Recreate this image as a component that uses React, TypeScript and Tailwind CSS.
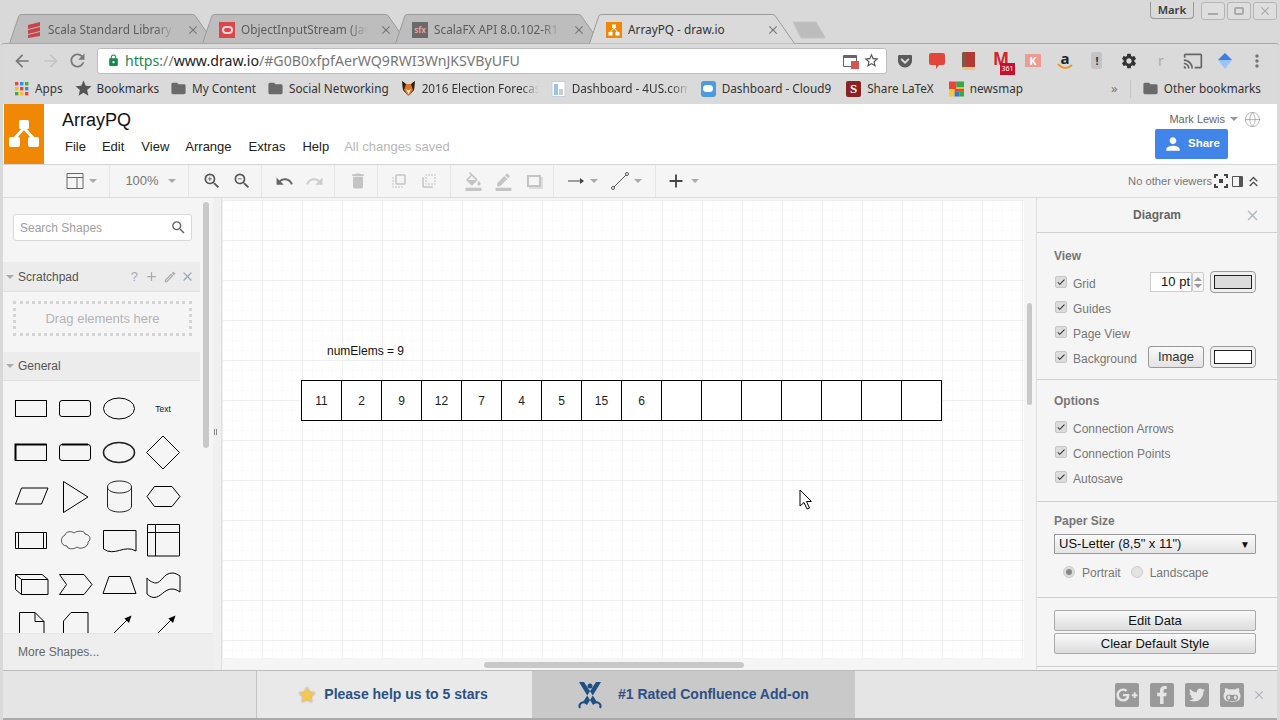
import React from "react";
import { MdArrowBack, MdArrowForward, MdRefresh, MdLock, MdStarBorder, MdStar, MdFolder, MdMoreVert, MdCast, MdSettings, MdZoomIn, MdZoomOut, MdUndo, MdRedo, MdDelete, MdFlipToFront, MdFlipToBack, MdFormatColorFill, MdBorderColor, MdAdd, MdSearch, MdPerson, MdCheck, MdClose, MdOutlineEdit, MdKeyboardDoubleArrowUp } from "react-icons/md";
import { FaGetPocket, FaGooglePlusG, FaFacebookF, FaTwitter, FaGithubAlt } from "react-icons/fa";
import { Globe } from "lucide-react";

const Caret = ({ cls = "border-t-[#aaa]" }: { cls?: string }) => (
  <span className={`inline-block w-0 h-0 border-x-[4px] border-x-transparent border-t-[4px] ${cls}`} />
);

function Tab({ title, icon, active, left }: { title: string; icon: React.ReactNode; active?: boolean; left: string }) {
  return (
    <div className={`absolute top-[14px] w-[206px] h-[30px] ${left} ${active ? "z-10" : ""}`}>
      <svg className="absolute inset-0" width="206" height="30" viewBox="0 0 206 30">
        <path d="M0.5 29.5 L10 1.5 Q11 0.5 13 0.5 L183 0.5 Q185 0.5 186 1.5 L205.5 29.5" fill={active ? "#dadada" : "#bdbdbd"} stroke="#9b9b9b" />
      </svg>
      <div className="relative flex items-center h-full pl-[17px] pr-[15px] gap-[6px] pt-[1px]">
        <span className="w-4 h-4 shrink-0 flex items-center justify-center">{icon}</span>
        <span className={`w-[127px] flex-none whitespace-nowrap overflow-hidden text-[11.8px] ${active ? "text-[#333]" : "text-[#5c5c5c] [mask-image:linear-gradient(to_right,black_85%,transparent)]"}`}>{title}</span>
        <MdClose className="ml-auto text-[#777] w-[14px] h-[14px] shrink-0" />
      </div>
    </div>
  );
}

const WinBtn = ({ children }: { children: React.ReactNode }) => (
  <div className="w-[24px] h-[18px] border border-[#b5b5b5] rounded-[3px] flex items-center justify-center text-[#9a9a9a] bg-[#dedede]">{children}</div>
);

function TabStrip() {
  return (
    <div className="relative h-[43px] shrink-0">
      <Tab left="left-[9px]" title="Scala Standard Library" icon={<svg width="16" height="16" viewBox="0 0 16 16"><path d="M2 3 L14 0 V4 L2 7Z M2 8 L14 5 V9 L2 12Z M2 13 L14 10 V14 L2 16Z" fill="#c9444a" /></svg>} />
      <Tab left="left-[202px]" title="ObjectInputStream (Java" icon={<span className="w-4 h-4 bg-[#d8474c] flex items-center justify-center"><span className="w-[11px] h-[8px] rounded-[4px] border-2 border-[#f4d5d5]" /></span>} />
      <Tab left="left-[395px]" title="ScalaFX API 8.0.102-R11" icon={<span className="w-4 h-4 bg-[#6a6a6a] text-[8px] leading-4 font-bold text-[#e2a0a0] text-center">sfx</span>} />
      <Tab active left="left-[589px]" title="ArrayPQ - draw.io" icon={<span className="w-4 h-4 bg-[#f08705] flex items-center justify-center"><svg width="12" height="12" viewBox="0 0 12 12"><path d="M4 0.5h4v3.5h-4z M0.5 8h4v3.5h-4z M7.5 8h4v3.5h-4z" fill="#fff" /><path d="M6 4 L2.5 8 M6 4 L9.5 8" stroke="#fff" /></svg></span>} />
      <svg className="absolute left-[792px] top-[21px]" width="35" height="18" viewBox="0 0 35 18"><path d="M1 1 H24 L33 16 Q33 17 31 17 H9Z" fill="#bcbcbc" stroke="#c4c4c4" /></svg>
      <div className="absolute right-[3px] top-[2px] flex items-start gap-[2px]">
        <div className="mr-[5px] w-[44px] h-[17px] border border-[#999] rounded-b-[4px] border-t-0 text-[11px] leading-[16px] text-center text-[#444] font-bold [text-shadow:0_0_1px_#fff]">Mark</div>
        <WinBtn><span className="w-[10px] h-[2px] mt-[5px] bg-[#aaa]" /></WinBtn>
        <WinBtn><span className="w-[10px] h-[8px] border-2 border-[#aaa] rounded-[2px]" /></WinBtn>
        <WinBtn><MdClose className="w-[14px] h-[14px] text-[#aaa]" /></WinBtn>
      </div>
    </div>
  );
}

const Ext = ({ children }: { children: React.ReactNode }) => <div className="relative w-[32px] h-[20px] flex items-center justify-center">{children}</div>;

function NavBar() {
  return (
    <div className="flex items-center h-[33px] pl-[8px] pr-[6px] shrink-0">
      <MdArrowBack className="w-[20px] h-[20px] text-[#777] ml-[3px] mr-[9px]" />
      <MdArrowForward className="w-[20px] h-[20px] text-[#c4c4c4] mr-[6px]" />
      <MdRefresh className="w-[21px] h-[21px] text-[#777]" />
      <div className="ml-[9px] w-[791px] h-[26px] bg-white border border-[#bdbdbd] rounded-[3px] flex items-center pl-[8px] pr-[6px] text-[14.15px] text-[#777]">
        <MdLock className="w-[13px] h-[13px] text-[#168a4e] mr-[5px] ml-[1px]" />
        <span className="whitespace-nowrap"><span className="text-[#1a8a50]">https</span>://<span className="text-[#222]">www.draw.io</span>/#G0B0xfpfAerWQ9RWI3WnJKSVByUFU</span>
        <div className="ml-auto flex items-center gap-[6px]">
          <span className="relative w-[14px] h-[12px] border border-[#666] rounded-[1px] border-t-[3px]"><span className="absolute -right-[3px] -bottom-[3px] w-[8px] h-[8px] bg-[#d9534f]" /></span>
          <MdStarBorder className="w-[17px] h-[17px] text-[#555]" />
        </div>
      </div>
      <div className="ml-[2px] flex items-center">
        <Ext><FaGetPocket className="w-[16px] h-[16px] text-[#5a5a5a]" /></Ext>
        <Ext><svg width="18" height="18" viewBox="0 0 18 18"><path d="M3 1h12a2 2 0 0 1 2 2v8a2 2 0 0 1-2 2h-4l-3 4v-4H3a2 2 0 0 1-2-2V3a2 2 0 0 1 2-2z" fill="#e2463a" /></svg></Ext>
        <Ext><svg width="15" height="18" viewBox="0 0 15 18"><path d="M1 2 Q1 0 3 0 H14 V15 H3 Q1 15 1 17Z" fill="#b23a32" /><path d="M1 15h13v3H2z" fill="#e6c87a" /><path d="M1 2 Q1 0 3 0 H5 V15 H1Z" fill="#7a5a40" /></svg></Ext>
        <Ext><span className="text-[#d5242a] font-bold text-[17px] leading-none -mt-[4px]">M</span><span className="absolute left-[15px] top-[12px] bg-[#c8102e] text-white text-[7px] leading-[12px] w-[15px] text-center">361</span></Ext>
        <Ext><span className="w-[16px] h-[13px] bg-[#ee9c92] text-white text-[11px] leading-[13px] font-bold text-center">K</span></Ext>
        <Ext><span className="text-[#222] font-bold text-[15px] leading-none -mt-[5px]">a</span><svg className="absolute left-[8px] top-[12px]" width="16" height="7" viewBox="0 0 16 7"><path d="M1 1 C5 6 11 6 15 2" fill="none" stroke="#f0971f" strokeWidth="2" /></svg></Ext>
        <Ext><span className="w-[11px] h-[17px] bg-[#c4c4c4] rounded-[2px] text-[11px] leading-[17px] font-bold text-center text-[#333]">!</span></Ext>
        <Ext><MdSettings className="w-[18px] h-[18px] text-[#333]" /></Ext>
        <Ext><span className="text-[#aaa] text-[14px]">r</span></Ext>
        <Ext><MdCast className="w-[20px] h-[20px] text-[#666]" /></Ext>
        <Ext><svg width="16" height="18" viewBox="0 0 16 18"><path d="M8 1 L15 8 L8 17 L1 8Z" fill="#9cc3f5" /><path d="M8 1 L15 8 H1Z" fill="#3b7de0" /></svg></Ext>
        <Ext><MdMoreVert className="w-[20px] h-[20px] text-[#777]" /></Ext>
      </div>
    </div>
  );
}

function Bm({ icon, text, w, cls = "" }: { icon: React.ReactNode; text: string; w?: string; cls?: string }) {
  return (
    <div className={`flex items-center gap-[6px] shrink-0 text-[11.75px] text-[#333] ${cls}`}>
      <span className="w-[15px] h-[16px] flex items-center justify-center">{icon}</span>
      <span className={`whitespace-nowrap overflow-hidden ${w ?? ""} ${w ? "[mask-image:linear-gradient(to_right,black_85%,transparent)]" : ""}`}>{text}</span>
    </div>
  );
}
const Folder = () => <MdFolder className="w-[17px] h-[17px] text-[#6a6a6a] shrink-0" />;

function Bookmarks() {
  return (
    <div className="flex items-center h-[22px] pt-[1px] pl-[13px] pr-[18px] gap-[12px] shrink-0">
      <Bm text="Apps" icon={<svg width="14" height="14" viewBox="0 0 14 14">{[0,5,10].flatMap((x,i)=>[0,5,10].map((y,j)=><rect key={`${i}${j}`} x={x} y={y} width="3.4" height="3.4" fill={["#e44","#fb2","#4a4","#29d","#e44","#fb2","#4a4","#29d","#e44"][i*3+j]} />))}</svg>} />
      <Bm cls="ml-[1px]" text="Bookmarks" icon={<MdStar className="w-[19px] h-[19px] text-[#555] shrink-0" />} />
      <Bm text="My Content" icon={<Folder />} />
      <Bm text="Social Networking" icon={<Folder />} />
      <Bm text="2016 Election Forecast" w="w-[117px]" icon={<svg width="15" height="17" viewBox="0 0 15 17"><path d="M1 1 L5 4 H10 L14 1 L13 10 L7.5 16 L2 10Z" fill="#e0732a" /><path d="M5 9 L7.5 14 L10 9 L7.5 10.5Z" fill="#fff" /><path d="M1 1 L5 4 L3 10 L7.5 16 L2 10Z" fill="#222" /><path d="M14 1 L10 4 L12 10 L7.5 16 L13 10Z" fill="#222" /></svg>} />
      <Bm text="Dashboard - 4US.com" w="w-[117px]" icon={<svg width="15" height="16" viewBox="0 0 15 16"><rect x="1" y="0.5" width="13" height="15" fill="#fff" stroke="#c5cfdb" /><rect x="3" y="3" width="4" height="11" fill="#9dc2e4" /><rect x="8" y="8" width="4" height="6" fill="#ccc" /></svg>} />
      <Bm text="Dashboard - Cloud9" icon={<span className="w-[16px] h-[16px] rounded-[3px] bg-[#4a9be0] flex items-center justify-center"><span className="w-[10px] h-[7px] rounded-full bg-white" /></span>} />
      <Bm cls="ml-[3px]" text="Share LaTeX" icon={<span className="w-[16px] h-[16px] rounded-[2px] bg-[#8a2222] text-white text-[13px] leading-[16px] text-center font-bold font-['Liberation_Serif',serif]">S</span>} />
      <Bm cls="ml-[3px]" text="newsmap" icon={<svg width="16" height="16" viewBox="0 0 16 16"><rect width="8" height="8" fill="#e43" /><rect x="8" width="8" height="6" fill="#3a4" /><rect y="8" width="6" height="8" fill="#ec3" /><rect x="6" y="8" width="10" height="3" fill="#e43" /><rect x="6" y="11" width="5" height="5" fill="#37c" /><rect x="8" y="6" width="8" height="2" fill="#eb3" /><rect x="11" y="11" width="5" height="5" fill="#3a4" /></svg>} />
      <span className="ml-auto text-[#777] text-[13px]">»</span>
      <span className="w-px h-[18px] bg-[#c4c4c4]" />
      <Bm text="Other bookmarks" icon={<Folder />} />
    </div>
  );
}

function AppHeader() {
  return (
    <div className="flex h-[61px] bg-white border-b border-[#d5d5d5] shrink-0">
      <div className="ml-[1px] w-[40px] h-[60px] bg-[#f08705] flex items-center justify-center shrink-0">
        <svg width="30" height="28" viewBox="0 0 30 28"><path d="M15 8 L6 18 M15 8 L24 18" stroke="#fff" strokeWidth="3" /><rect x="10" y="0" width="10" height="9" rx="1.5" fill="#fff" /><rect x="0" y="17" width="11" height="10" rx="2" fill="#fff" /><rect x="19" y="17" width="11" height="10" rx="2" fill="#fff" /></svg>
      </div>
      <div className="flex-1 pl-[18px] pt-[4px]">
        <div className="text-[18px] leading-[24px] text-[#111]">ArrayPQ</div>
        <div className="mt-[7px] pl-[3px] flex items-center text-[13px] leading-[15px] text-[#222]">
          <span>File</span><span className="ml-[16px]">Edit</span><span className="ml-[17px]">View</span><span className="ml-[16px]">Arrange</span><span className="ml-[17px]">Extras</span><span className="ml-[17px]">Help</span>
          <span className="text-[#b8b8b8] ml-[15px]">All changes saved</span>
        </div>
      </div>
      <div className="flex flex-col items-end pr-[16px] pt-[5px] w-[150px]">
        <div className="flex items-center gap-[5px] text-[11px] text-[#666] h-[20px]">Mark Lewis <Caret cls="border-t-[#999]" /><Globe className="w-[17px] h-[17px] text-[#999] ml-[1px]" strokeWidth={1} /></div>
        <div className="mr-[33px] w-[73px] h-[30px] bg-[#4285e8] rounded-[2px] flex items-center justify-center gap-[5px] text-white text-[11.5px] font-bold"><MdPerson className="w-[20px] h-[20px]" />Share</div>
      </div>
    </div>
  );
}

const Sec = ({ w, children, last }: { w: string; children: React.ReactNode; last?: boolean }) => (
  <div className={`h-full flex items-center ${w} ${last ? "" : "border-r border-[#e5e5e5]"} shrink-0`}>{children}</div>
);

function Toolbar() {
  return (
    <div className="flex h-[33px] bg-[#f5f5f5] border-b border-[#dcdcdc] items-center shrink-0 pr-[15px]">
      <Sec w="w-[107px] justify-center pl-[50px] gap-[4px]"><svg width="18" height="18" viewBox="0 0 18 18" className="mr-[1px]"><path d="M1 1.5h16v15H1z M1 5.5h16 M11 5.5v11" fill="none" stroke="#666" /></svg><Caret /></Sec>
      <Sec w="w-[79px] justify-center gap-[9px] pl-[3px]"><span className="text-[13px] text-[#777]">100%</span><Caret /></Sec>
      <Sec w="w-[73px] justify-center gap-[10px] pl-[4px]"><MdZoomIn className="w-[20px] h-[20px] text-[#555]" /><MdZoomOut className="w-[20px] h-[20px] text-[#555]" /></Sec>
      <Sec w="w-[73px] justify-center gap-[11px] pl-[2px]"><MdUndo className="w-[19px] h-[19px] text-[#666]" /><MdRedo className="w-[19px] h-[19px] text-[#ccc]" /></Sec>
      <Sec w="w-[43px] justify-center pl-[4px]"><MdDelete className="w-[20px] h-[20px] text-[#c4c4c4]" /></Sec>
      <Sec w="w-[73px] justify-center gap-[12px]"><MdFlipToFront className="w-[18px] h-[18px] text-[#c4c4c4]" /><MdFlipToBack className="w-[18px] h-[18px] text-[#c4c4c4]" /></Sec>
      <Sec w="w-[103px] justify-center gap-[11px]"><MdFormatColorFill className="w-[19px] h-[19px] text-[#c4c4c4]" /><MdBorderColor className="w-[19px] h-[19px] text-[#c4c4c4]" /><span className="w-[14px] h-[12px] border-2 border-[#c4c4c4] shadow-[2px_2px_0_#ddd] ml-[3px]" /></Sec>
      <Sec w="w-[102px] pl-[13px] gap-[5px]">
        <svg width="18" height="10" viewBox="0 0 18 10"><path d="M1 5h14" stroke="#444" /><path d="M13 2l4 3-4 3z" fill="#444" /></svg><Caret /><span className="w-[3px]" />
        <svg width="18" height="18" viewBox="0 0 18 18"><path d="M2 16 L16 2" stroke="#555" /><circle cx="2" cy="16" r="1.5" fill="#fff" stroke="#555" /><circle cx="16" cy="2" r="1.5" fill="#fff" stroke="#555" /></svg><Caret />
      </Sec>
      <Sec w="w-[80px] pl-[9px] gap-[4px]" last><MdAdd className="w-[22px] h-[22px] text-[#444]" /><Caret /></Sec>
      <div className="ml-auto flex items-center text-[#777] text-[11.2px]">
        <span className="mr-[2px]">No other viewers</span>
        <svg width="14" height="14" viewBox="0 0 14 14" className="mr-[4px]"><path d="M1 4V1h3 M10 1h3v3 M13 10v3h-3 M4 13H1v-3" stroke="#444" strokeWidth="2" fill="none" /><rect x="5" y="5" width="4" height="4" fill="#444" /></svg>
        <svg width="11" height="11" viewBox="0 0 11 11" className="mr-[2px]"><path d="M.5.5h10v10H.5z" fill="none" stroke="#555" /><rect x="7" y="1" width="3" height="9" fill="#555" /></svg>
        <MdKeyboardDoubleArrowUp className="w-[17px] h-[17px] text-[#555]" />
      </div>
    </div>
  );
}

const S = { fill: "none", stroke: "#000", strokeWidth: 1 } as const;
const arrow = <g><path d="M6 38 L31 13" {...S} /><path d="M34.5 9.5 L32 17 L27.5 12.5Z" fill="#000" /></g>;
const shapes: React.ReactNode[] = [
  <rect x="6.5" y="14.5" width="31" height="16" {...S} />,
  <rect x="6.5" y="14.5" width="31" height="16" rx="2.5" {...S} />,
  <ellipse cx="22" cy="22.5" rx="15.5" ry="10.5" {...S} />,
  <text x="22" y="25.5" textAnchor="middle" fontSize="8.5" fontFamily="Liberation Sans" fill="#111">Text</text>,
  <g><rect x="6.5" y="14.5" width="31" height="16" {...S} /><path d="M6.5 30.5 V14.5 H37.5" fill="none" stroke="#000" strokeWidth="2" /></g>,
  <g><rect x="6.5" y="14.5" width="31" height="16" rx="2.5" {...S} /><path d="M9 14.5 H35" fill="none" stroke="#000" strokeWidth="2" /></g>,
  <g><ellipse cx="22" cy="22.5" rx="15.5" ry="10" fill="none" stroke="#222" strokeWidth="1.6" /></g>,
  <path d="M22 6 L38.5 22.5 L22 39 L5.5 22.5Z" {...S} />,
  <path d="M6.5 30 L12.5 14 H39 L32.5 30Z" {...S} />,
  <path d="M10.5 7.5 L35 23 L10.5 38.5Z" {...S} />,
  <path d="M10.5 13 C10.5 5 34.5 5 34.5 13 V32 C34.5 40 10.5 40 10.5 32Z M10.5 13 C10.5 21 34.5 21 34.5 13" fill="none" stroke="#222" strokeWidth="1" />,
  <path d="M6 22.5 L13.5 12.5 H31 L39 22.5 L31 32.5 H13.5Z" {...S} />,
  <path d="M6.5 14.5 H37.5 V30.5 H6.5Z M9.5 14.5 V30.5 M34.5 14.5 V30.5" {...S} />,
  <path d="M12 17 C13 13 19 13 21 15 C25 12 32 13 32 16 C38 17 38 22 35 24 C36 29 27 32 24 29 C20 32 14 31 14 28 C7 28 7 19 12 17Z" fill="none" stroke="#111" strokeWidth="0.7" />,
  <path d="M6.5 12.5 H39 V33 C27 26 18 39 6.5 31Z" {...S} />,
  <path d="M6.5 6.5 H38.5 V38 H6.5Z M14.5 6.5 V38 M6.5 14.5 H38.5" {...S} />,
  <path d="M6.5 12.5 L12.5 17.5 V32.5 H39 V17.5 H12.5 M6.5 12.5 V27.5 L12.5 32.5 M6.5 12.5 H33 L39 17.5" {...S} />,
  <path d="M6.5 12.5 H31 L39 22.5 L31 32.5 H6.5 L13.5 22.5Z" {...S} />,
  <path d="M12 14.5 H33 L39 31.5 H6Z" {...S} />,
  <path d="M6 16 C6 17 11 21 15 21 C20 21 23 11 31 11 C34 11 36 12 39 14 V30 C36 28 34 27 31 27 C23 27 20 35.5 13 35.5 C10 35.5 7 33 6 32Z" {...S} />,
  <path d="M10.5 44 V6.5 H26 L35 15.5 V44 M26 6.5 V15.5 H35" {...S} />,
  <path d="M10.5 44 V15 L18 6.5 H35 V44" {...S} />,
  arrow,
  arrow,
];

function Sidebar() {
  return (
    <div className="relative w-[210px] shrink-0 bg-[#f5f5f5] flex flex-col">
      <div className="flex-1 relative overflow-hidden pr-[13px]">
        <div className="absolute right-[4px] top-[4px] w-[6px] h-[246px] bg-[#c8c8c8] rounded-[3px]" />
        <div className="pl-[10px] pt-[16px] pr-[8px]">
          <div className="h-[27px] bg-white border border-[#d8d8d8] rounded-[3px] flex items-center pl-[6px] pr-[4px] text-[12px] text-[#a0a0a0]">Search Shapes<MdSearch className="ml-auto w-[17px] h-[17px] text-[#666]" /></div>
        </div>
        <div className="mt-[21px] h-[30px] bg-[#ececec] border-b border-[#e0e0e0] flex items-center pl-[3px] text-[12px] text-[#555]">
          <Caret /> <span className="ml-[4px]">Scratchpad</span>
          <span className="ml-auto flex items-center gap-[3px] text-[#aaa] mr-[5px]"><span className="text-[13px] mr-[3px] -ml-[1px]">?</span><MdAdd className="w-[15px] h-[15px]" /><MdOutlineEdit className="w-[14px] h-[14px] ml-[1px]" /><MdClose className="w-[15px] h-[15px] text-[#98a6bd]" /></span>
        </div>
        <div className="ml-[10px] mr-[8px] mt-[9px] h-[35px] border-[3px] border-dotted border-[#d4d4d4] flex items-center justify-center text-[13px] text-[#b4b4b4]">Drag elements here</div>
        <div className="mt-[16px] h-[29px] bg-[#ececec] border-b border-[#e0e0e0] flex items-center pl-[3px] text-[12px] text-[#555]"><Caret /><span className="ml-[4px]">General</span></div>
        <div className="grid grid-cols-[repeat(4,44px)] auto-rows-[44px] pl-[6px] mt-[5px]">
          {shapes.map((s, i) => <svg key={i} width="44" height="44" viewBox="0 0 44 44" className="overflow-hidden">{s}</svg>)}
        </div>
      </div>
      <div className="h-[37px] shrink-0 bg-[#eeeeee] border-t border-[#e5e5e5] flex items-center pl-[15px] text-[12px] text-[#666]">More Shapes...</div>
    </div>
  );
}

function Canvas() {
  const vals = ["11","2","9","12","7","4","5","15","6","","","","","","",""];
  return (
    <div className="relative w-[815px] shrink-0 bg-[#f5f5f5] border-l border-[#dedede] overflow-hidden">
      <div className="absolute left-0 top-[2px] w-[802px] h-[458px] bg-white bg-[linear-gradient(to_right,#efefef_1px,transparent_1px),linear-gradient(to_bottom,#efefef_1px,transparent_1px),linear-gradient(to_right,#fbfbfb_1px,transparent_1px),linear-gradient(to_bottom,#fbfbfb_1px,transparent_1px)] bg-[length:40px_40px,40px_40px,10px_10px,10px_10px]" >
        <div className="absolute left-[105px] top-[143px] text-[12px] leading-[16px] text-[#111]">numElems = 9</div>
        <div className="absolute left-[79px] top-[180px] flex border border-black bg-white">
          {vals.map((v, i) => <div key={i} className={`h-[39px] flex items-center justify-center text-[12px] text-[#222] ${i < 15 ? "w-[40px] border-r border-black" : "w-[39px]"}`}>{v}</div>)}
        </div>
        <svg className="absolute left-[577px] top-[289px]" width="14" height="21" viewBox="0 0 14 21"><path d="M1 1 V17 L5 13.5 L8 20 L10.5 19 L7.5 12.5 H12.5Z" fill="#fff" stroke="#000" /></svg>
      </div>
      <div className="absolute left-[805px] top-[105px] w-[5px] h-[102px] bg-[#c8c8c8] rounded-[3px]" />
      <div className="absolute left-[262px] top-[464px] w-[260px] h-[6px] bg-[#c8c8c8] rounded-[3px]" />
    </div>
  );
}

const Check = ({ label }: { label: string }) => (
  <div className="flex items-center h-[25px]">
    <span className="w-[12px] h-[12px] rounded-[2px] bg-[#dcdcdc] border border-[#c6c6c6] flex items-center justify-center -mt-[3px] ml-[1px]"><MdCheck className="w-[12px] h-[12px] text-[#222]" /></span>
    <span className="ml-[6px] text-[12px] text-[#777]">{label}</span>
  </div>
);
const Swatch = ({ fill }: { fill: string }) => (
  <div className="w-[46px] h-[22px] border border-[#999] rounded-[4px] bg-[#f0f0f0] p-[3px]"><div className={`w-full h-full border border-[#222] ${fill}`} /></div>
);
const GrayBtn = ({ t }: { t: string }) => (
  <div className="h-[21px] border border-[#aaa] rounded-[2px] bg-[linear-gradient(#fafafa,#dcdcdc)] flex items-center justify-center text-[13px] text-[#111]">{t}</div>
);

function RightPanel() {
  return (
    <div className="flex-1 bg-[#f5f5f5] border-l border-[#dedede] flex flex-col overflow-hidden">
      <div className="relative h-[35px] shrink-0 border-b border-[#cfcfcf] flex items-center justify-center text-[12px] font-bold text-[#666]">Diagram<MdClose className="absolute right-[16px] top-[9px] w-[17px] h-[17px] text-[#b0b8c4]" /></div>
      <div className="pl-[17px] pr-[21px] pt-[16px] h-[147px] border-b border-[#cfcfcf] shrink-0">
        <div className="text-[12px] font-bold text-[#777] h-[14px] leading-[14px] mb-[8px]">View</div>
        <div className="relative">
          <Check label="Grid" /><Check label="Guides" /><Check label="Page View" /><Check label="Background" />
          <div className="absolute left-[96px] top-[0px] flex items-center">
            <span className="w-[42px] h-[20px] bg-white border border-[#ccc] flex items-center justify-end pr-[1px] text-[13px] text-[#111]">10 pt</span>
            <span className="w-[12px] h-[20px] border border-[#ccc] rounded-[2px] flex flex-col items-center justify-center gap-[3px]"><span className="w-0 h-0 border-x-[4px] border-x-transparent border-b-[4px] border-b-[#999]" /><Caret cls="border-t-[#999]" /></span>
            <span className="ml-[6px]"><Swatch fill="bg-[#dcdcdc]" /></span>
          </div>
          <div className="absolute left-[94px] top-[75px] flex items-center gap-[6px]">
            <span className="w-[56px] h-[22px] border border-[#999] rounded-[3px] bg-[linear-gradient(#fafafa,#e2e2e2)] text-[13px] text-[#333] text-center leading-[20px]">Image</span>
            <Swatch fill="bg-white" />
          </div>
        </div>
      </div>
      <div className="pl-[17px] pt-[14px] h-[122px] border-b border-[#cfcfcf] shrink-0">
        <div className="text-[12px] font-bold text-[#777] h-[14px] leading-[14px] mb-[8px]">Options</div>
        <Check label="Connection Arrows" /><Check label="Connection Points" /><Check label="Autosave" />
      </div>
      <div className="pl-[17px] pr-[21px] pt-[12px] h-[96px] border-b border-[#cfcfcf] shrink-0">
        <div className="text-[12px] font-bold text-[#777] h-[14px] leading-[14px] mb-[6px]">Paper Size</div>
        <div className="relative h-[20px] border border-[#999] rounded-[1px] bg-[linear-gradient(#fafafa,#e4e4e4)] flex items-center pl-[4px] text-[13px] text-[#111]">US-Letter (8,5" x 11")<span className="absolute right-[5px] text-[10px] text-[#111]">▼</span></div>
        <div className="flex items-center mt-[10px] pl-[9px] text-[12px] text-[#777]">
          <span className="w-[12px] h-[12px] rounded-full bg-[#dcdcdc] border border-[#ccc] flex items-center justify-center -mt-[3px]"><span className="w-[6px] h-[6px] rounded-full bg-[#888]" /></span>
          <span className="ml-[7px]">Portrait</span>
          <span className="ml-[10px] w-[12px] h-[12px] rounded-full bg-[#e4e4e4] border border-[#ccc] -mt-[3px]" />
          <span className="ml-[7px]">Landscape</span>
        </div>
      </div>
      <div className="pl-[17px] pr-[21px] pt-[12px] h-[69px] border-b border-[#cfcfcf] flex flex-col gap-[2px] shrink-0">
        <GrayBtn t="Edit Data" /><GrayBtn t="Clear Default Style" />
      </div>
    </div>
  );
}

const Social = ({ children }: { children: React.ReactNode }) => (
  <span className="w-[24px] h-[24px] rounded-[2px] bg-[#999] text-[#e5e5e5] flex items-center justify-center overflow-hidden">{children}</span>
);

function Footer() {
  return (
    <div className="h-[50px] shrink-0 flex bg-[#e5e5e5] border-t border-[#bcbcbc] border-b-2 border-b-[#aaa]">
      <div className="w-[254px] shrink-0 border-r border-[#c4c4c4]" />
      <div className="w-[275px] shrink-0 bg-[#e9e9e9] flex items-center justify-center gap-[7px] pr-[4px] text-[14px] font-bold text-[#2d5086]">
        <MdStar className="w-[20px] h-[20px] text-[#f2cb4e] shrink-0 [filter:drop-shadow(0_0_1px_#a88)]" />Please help us to 5 stars
      </div>
      <div className="w-[323px] shrink-0 bg-[#c9c9c9] flex items-center pl-[43px] gap-[13px] text-[14px] font-bold text-[#2d5086]">
        <svg width="30" height="28" viewBox="0 0 30 28" className="shrink-0"><path d="M4 1 L9 1 L22 21 L18 24Z M26 1 L21 1 L8 21 L12 24Z" fill="#205081" /><circle cx="15" cy="5" r="2.5" fill="#205081" /><path d="M12 22 C7 20 3 23 5 27 M18 22 C23 20 27 23 25 27" stroke="#205081" strokeWidth="2" fill="none" /></svg>
        #1 Rated Confluence Add-on
      </div>
      <div className="flex-1 flex items-center justify-end gap-[11px] pr-[11px]">
        <Social><FaGooglePlusG className="w-[22px] h-[22px]" /></Social>
        <Social><FaFacebookF className="w-[18px] h-[18px]" /></Social>
        <Social><FaTwitter className="w-[16px] h-[16px]" /></Social>
        <Social><FaGithubAlt className="w-[18px] h-[18px]" /></Social>
        <MdClose className="-ml-[3px] w-[14px] h-[14px] text-[#a9b5c8]" />
      </div>
    </div>
  );
}

export default function App() {
  return (
    <div className="w-[1280px] h-[720px] overflow-hidden flex flex-col bg-[#d9d9d9] font-['Noto_Sans',sans-serif]">
      <TabStrip />
      <div className="flex-1 mx-[1px] flex flex-col min-h-0 border-t border-[#a8a8a8] rounded-t-[3px] bg-[#dadada] relative">
        <NavBar />
        <Bookmarks />
      </div>
      <div className="h-[616px] shrink-0 mx-[3px] flex flex-col font-['Liberation_Sans',sans-serif]">
        <AppHeader />
        <Toolbar />
        <div className="flex-1 flex min-h-0">
          <Sidebar />
          <div className="w-[8px] shrink-0 bg-[#f0f0f0] relative"><span className="absolute left-[1px] top-[231px] w-[3px] h-[6px] border-x border-[#888]" /></div>
          <Canvas />
          <RightPanel />
        </div>
        <Footer />
      </div>
    </div>
  );
}
